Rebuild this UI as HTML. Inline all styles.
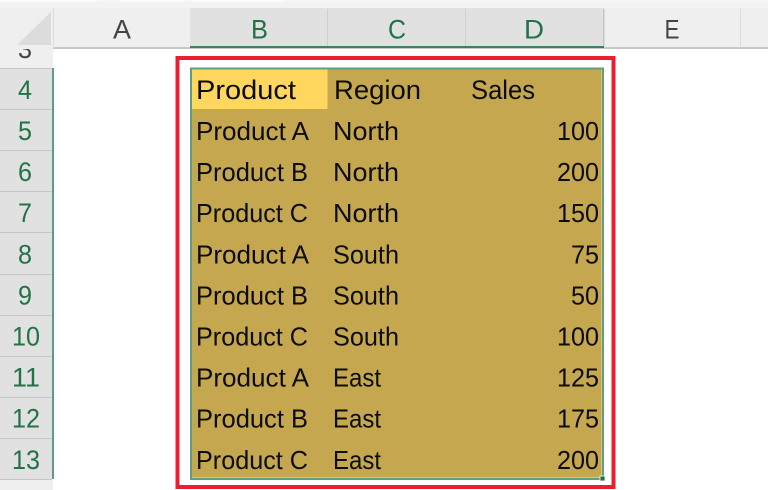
<!DOCTYPE html>
<html><head><meta charset="utf-8"><style>
html,body{margin:0;padding:0;background:#fff}
svg{display:block}
text{font-family:"Liberation Sans",sans-serif}
.c{font-size:26px;fill:#0c0c08}
.h{font-size:27px;fill:#0c0c08}
.g{font-size:27px;fill:#217346}
.k{font-size:27px;fill:#444}
</style></head><body>
<svg width="768" height="490" viewBox="0 0 768 490" xmlns="http://www.w3.org/2000/svg">
<rect width="768" height="490" fill="#fff"/>
<rect y="0" width="768" height="8" fill="#f7f7f7"/>
<rect x="0" y="0" width="97" height="1.5" fill="#fff"/><rect x="120" y="0" width="65" height="1.5" fill="#fff"/><rect x="192" y="0" width="90" height="1.5" fill="#fff"/>
<rect y="2" width="768" height="6" fill="#f3f3f3"/>
<rect y="8" width="768" height="40" fill="#efefef"/>
<rect y="47" width="768" height="2" fill="#c8c8c8"/>
<rect x="0" y="8" width="53" height="482" fill="#efefef"/>
<rect x="53" y="8" width="1" height="40" fill="#dcdcdc"/>
<polygon points="17,45 51,45 51,12" fill="#dcdcdc"/>
<rect x="190" y="8" width="414" height="39" fill="#e1e1e1"/>
<rect x="190" y="46" width="414" height="2" fill="#217346" opacity=".85"/>
<rect x="327" y="9" width="1" height="37" fill="#cfcfcf"/><rect x="465" y="9" width="1" height="37" fill="#cfcfcf"/><rect x="603" y="9" width="1.5" height="37" fill="#c4c4c4"/>
<rect x="740" y="9" width="1" height="37" fill="#dcdcdc"/>
<text class="k" x="113" y="38.500" textLength="18" lengthAdjust="spacingAndGlyphs">A</text>
<text class="g" x="251" y="38.500" textLength="17" lengthAdjust="spacingAndGlyphs">B</text>
<text class="g" x="388" y="38.500" textLength="18" lengthAdjust="spacingAndGlyphs">C</text>
<text class="g" x="524" y="38.500" textLength="20" lengthAdjust="spacingAndGlyphs">D</text>
<text class="k" x="664.500" y="38.500" textLength="15" lengthAdjust="spacingAndGlyphs">E</text>

<rect x="0" y="68" width="53" height="411" fill="#e1e1e1"/>
<rect x="52" y="68" width="2" height="411" fill="#5f9f7d"/>
<g fill="#c6c6c6"><rect y="68" width="52" height="1"/><rect y="109" width="52" height="1"/><rect y="150" width="52" height="1"/><rect y="191" width="52" height="1"/><rect y="232" width="52" height="1"/><rect y="274" width="52" height="1"/><rect y="315" width="52" height="1"/><rect y="356" width="52" height="1"/><rect y="397" width="52" height="1"/><rect y="438" width="52" height="1"/><rect y="479" width="52" height="1"/></g>
<svg x="0" y="49" width="53" height="19"><text class="k" x="18" y="9" textLength="14" lengthAdjust="spacingAndGlyphs">3</text></svg>
<text class="g" x="18" y="99" textLength="14" lengthAdjust="spacingAndGlyphs">4</text>
<text class="g" x="18" y="140" textLength="14" lengthAdjust="spacingAndGlyphs">5</text>
<text class="g" x="18" y="181.100" textLength="14" lengthAdjust="spacingAndGlyphs">6</text>
<text class="g" x="18" y="222.200" textLength="14" lengthAdjust="spacingAndGlyphs">7</text>
<text class="g" x="18" y="263.300" textLength="14" lengthAdjust="spacingAndGlyphs">8</text>
<text class="g" x="18" y="304.400" textLength="14" lengthAdjust="spacingAndGlyphs">9</text>
<text class="g" x="12" y="345.500" textLength="28" lengthAdjust="spacingAndGlyphs">10</text>
<text class="g" x="12" y="386.600" textLength="28" lengthAdjust="spacingAndGlyphs">11</text>
<text class="g" x="12" y="427.700" textLength="28" lengthAdjust="spacingAndGlyphs">12</text>
<text class="g" x="12" y="468.800" textLength="28" lengthAdjust="spacingAndGlyphs">13</text>

<rect x="177.500" y="58" width="436" height="429" fill="none" stroke="#ed1c2e" stroke-width="4"/>
<rect x="190" y="67.500" width="414" height="412.500" fill="#5f9f7d"/>
<rect x="192" y="69.500" width="410" height="408.500" fill="#eadfb0"/>
<rect x="192" y="69.500" width="409.500" height="408" fill="#c5a74f"/>
<rect x="192" y="69.500" width="135.500" height="39.500" fill="#ffd75f"/>
<rect x="600" y="476" width="5" height="5" fill="#217346" stroke="#fff" stroke-width=".8"/>

<text class="h" x="196" y="99" textLength="100" lengthAdjust="spacingAndGlyphs">Product</text>
<text class="h" x="334" y="99" textLength="87" lengthAdjust="spacingAndGlyphs">Region</text>
<text class="h" x="471" y="99" textLength="64" lengthAdjust="spacingAndGlyphs">Sales</text>

<text class="c" x="196" y="140" textLength="113" lengthAdjust="spacingAndGlyphs">Product A</text>
<text class="c" x="196" y="181.100" textLength="112" lengthAdjust="spacingAndGlyphs">Product B</text>
<text class="c" x="196" y="222.200" textLength="112" lengthAdjust="spacingAndGlyphs">Product C</text>
<text class="c" x="196" y="263.300" textLength="113" lengthAdjust="spacingAndGlyphs">Product A</text>
<text class="c" x="196" y="304.400" textLength="112" lengthAdjust="spacingAndGlyphs">Product B</text>
<text class="c" x="196" y="345.500" textLength="112" lengthAdjust="spacingAndGlyphs">Product C</text>
<text class="c" x="196" y="386.600" textLength="113" lengthAdjust="spacingAndGlyphs">Product A</text>
<text class="c" x="196" y="427.700" textLength="112" lengthAdjust="spacingAndGlyphs">Product B</text>
<text class="c" x="196" y="468.800" textLength="112" lengthAdjust="spacingAndGlyphs">Product C</text>

<text class="c" x="333" y="140" textLength="66" lengthAdjust="spacingAndGlyphs">North</text>
<text class="c" x="333" y="181.100" textLength="66" lengthAdjust="spacingAndGlyphs">North</text>
<text class="c" x="333" y="222.200" textLength="66" lengthAdjust="spacingAndGlyphs">North</text>
<text class="c" x="333" y="263.300" textLength="66" lengthAdjust="spacingAndGlyphs">South</text>
<text class="c" x="333" y="304.400" textLength="66" lengthAdjust="spacingAndGlyphs">South</text>
<text class="c" x="333" y="345.500" textLength="66" lengthAdjust="spacingAndGlyphs">South</text>
<text class="c" x="333" y="386.600" textLength="48" lengthAdjust="spacingAndGlyphs">East</text>
<text class="c" x="333" y="427.700" textLength="48" lengthAdjust="spacingAndGlyphs">East</text>
<text class="c" x="333" y="468.800" textLength="48" lengthAdjust="spacingAndGlyphs">East</text>

<text class="c" x="557" y="140" textLength="42" lengthAdjust="spacingAndGlyphs">100</text>
<text class="c" x="557" y="181.100" textLength="42" lengthAdjust="spacingAndGlyphs">200</text>
<text class="c" x="557" y="222.200" textLength="42" lengthAdjust="spacingAndGlyphs">150</text>
<text class="c" x="571" y="263.300" textLength="28" lengthAdjust="spacingAndGlyphs">75</text>
<text class="c" x="571" y="304.400" textLength="28" lengthAdjust="spacingAndGlyphs">50</text>
<text class="c" x="557" y="345.500" textLength="42" lengthAdjust="spacingAndGlyphs">100</text>
<text class="c" x="557" y="386.600" textLength="42" lengthAdjust="spacingAndGlyphs">125</text>
<text class="c" x="557" y="427.700" textLength="42" lengthAdjust="spacingAndGlyphs">175</text>
<text class="c" x="557" y="468.800" textLength="42" lengthAdjust="spacingAndGlyphs">200</text>
</svg>
</body></html>
